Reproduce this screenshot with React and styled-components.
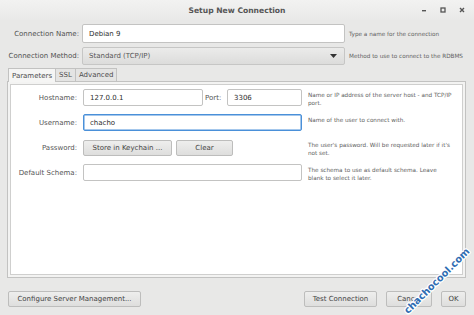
import styled, { createGlobalStyle } from "styled-components";

const GlobalStyle = createGlobalStyle`
  html, body {
    margin: 0;
    padding: 0;
    background: #e8e8e7;
  }
  * {
    box-sizing: border-box;
  }
`;

function WindowControls() {
  return (
    <Controls>
      <svg width="6" height="6" viewBox="0 0 6 6">
        <rect x="1" y="3" width="4" height="1.4" fill="#555" />
      </svg>
      <svg width="6" height="6" viewBox="0 0 6 6">
        <rect x="1" y="1" width="4" height="4" fill="none" stroke="#555" strokeWidth="1.3" />
      </svg>
      <svg width="6" height="6" viewBox="0 0 6 6">
        <path d="M1 1 L5 5 M5 1 L1 5" stroke="#555" strokeWidth="1.4" />
      </svg>
    </Controls>
  );
}

function App() {
  return (
    <Window>
      <GlobalStyle />
      <TitleBar>
        <Title>Setup New Connection</Title>
        <WindowControls />
      </TitleBar>

      <TopForm>
        <TopLabel>Connection Name:</TopLabel>
        <Entry $h={19}>Debian 9</Entry>
        <Hint>Type a name for the connection</Hint>

        <TopLabel>Connection Method:</TopLabel>
        <Combo>
          <span>Standard (TCP/IP)</span>
          <svg width="7" height="4" viewBox="0 0 7 4">
            <path d="M0 0 L7 0 L3.5 4 Z" fill="#333" />
          </svg>
        </Combo>
        <Hint>Method to use to connect to the RDBMS</Hint>
      </TopForm>

      <Tabs>
        <Tab $active>Parameters</Tab>
        <Tab>SSL</Tab>
        <Tab>Advanced</Tab>
      </Tabs>

      <Panel>
        <PanelInner>
          <ParamLabel>Hostname:</ParamLabel>
          <HostField>
            <Entry $h={17} $w={120}>127.0.0.1</Entry>
            <PortLabel>Port:</PortLabel>
            <Entry $h={17} $w={75}>3306</Entry>
          </HostField>
          <SmallHint>
            Name or IP address of the server host - and TCP/IP
            <br />
            port.
          </SmallHint>

          <ParamLabel>Username:</ParamLabel>
          <Entry $h={17} $focused>chacho</Entry>
          <SmallHint>Name of the user to connect with.</SmallHint>

          <ParamLabel>Password:</ParamLabel>
          <ButtonRow>
            <Button $w={89}>Store in Keychain ...</Button>
            <Button $w={57}>Clear</Button>
          </ButtonRow>
          <SmallHint>
            The user's password. Will be requested later if it's
            <br />
            not set.
          </SmallHint>

          <ParamLabel>Default Schema:</ParamLabel>
          <Entry $h={17} />
          <SmallHint>
            The schema to use as default schema. Leave
            <br />
            blank to select it later.
          </SmallHint>
        </PanelInner>
      </Panel>

      <Footer>
        <Button $w={133}>Configure Server Management...</Button>
        <FooterRight>
          <Button $w={73}>Test Connection</Button>
          <Button $w={46}>Cancel</Button>
          <Button $w={25}>OK</Button>
        </FooterRight>
      </Footer>

      <Watermark>chachocool.com</Watermark>
    </Window>
  );
}

const Window = styled.div`
  position: relative;
  width: 474px;
  height: 315px;
  display: flex;
  flex-direction: column;
  background: #e8e8e7;
  font-family: "DejaVu Sans", "Liberation Sans", sans-serif;
  font-size: 7px;
  color: #4a4a4a;
  overflow: hidden;
`;

const TitleBar = styled.div`
  position: relative;
  height: 20px;
  display: flex;
  align-items: center;
  justify-content: center;
  background: linear-gradient(#f2f2f1, #e9e9e8);
`;

const Title = styled.div`
  font-weight: bold;
  font-size: 7.6px;
  color: #565656;
  margin-top: 1px;
`;

const Controls = styled.div`
  position: absolute;
  right: 9px;
  top: 7px;
  display: flex;
  gap: 13px;
`;

const TopForm = styled.div`
  display: grid;
  grid-template-columns: 82px 263px 1fr;
  row-gap: 4px;
  align-items: center;
  margin-top: 4px;
`;

const TopLabel = styled.div`
  text-align: right;
  padding-right: 3px;
  white-space: nowrap;
  color: #505050;
`;

const Hint = styled.div`
  font-size: 5.7px;
  color: #606060;
  padding-left: 4px;
  white-space: nowrap;
`;

const SmallHint = styled.div`
  font-size: 5.7px;
  color: #606060;
  line-height: 8px;
  align-self: start;
  padding-top: 2px;
`;

const Entry = styled.div`
  height: ${({ $h }) => $h}px;
  width: ${({ $w }) => ($w ? `${$w}px` : "auto")};
  background: #ffffff;
  border: 1px solid ${({ $focused }) => ($focused ? "#4a90d9" : "#c3c3c2")};
  border-radius: 2px;
  box-shadow: ${({ $focused }) => ($focused ? "inset 0 0 0 0.5px #4a90d9" : "none")};
  display: flex;
  align-items: center;
  padding-left: 6px;
  font-size: 7px;
  color: #2e2e2e;
`;

const Combo = styled.div`
  height: 18px;
  display: flex;
  align-items: center;
  justify-content: space-between;
  padding: 0 6px;
  border: 1px solid #c6c6c5;
  border-radius: 2px;
  background: linear-gradient(#ebebea, #dcdcdb);
  color: #555;

  svg {
    margin-right: 1px;
  }
`;

const Tabs = styled.div`
  display: flex;
  align-items: flex-end;
  margin: 2px 0 0 8px;
  height: 14px;
`;

const Tab = styled.div`
  height: ${({ $active }) => ($active ? "14px" : "13px")};
  padding: 0 3px;
  display: flex;
  align-items: center;
  border: 1px solid #c2c2c1;
  border-bottom: none;
  margin-right: -1px;
  background: ${({ $active }) => ($active ? "#f5f5f4" : "#e4e4e3")};
  color: #4c4c4c;
  font-size: 7px;
  margin-bottom: ${({ $active }) => ($active ? "-1px" : "0")};
  position: relative;
  z-index: ${({ $active }) => ($active ? 1 : 0)};
`;

const Panel = styled.div`
  margin: 0 8px 0 7px;
  height: 197px;
  border: 1px solid #c2c2c1;
  background: #f3f3f2;
  padding: 2px;
`;

const PanelInner = styled.div`
  height: 100%;
  background: #ffffff;
  border: 1px solid #cfcfce;
  display: grid;
  grid-template-columns: 66px 219px 1fr;
  grid-auto-rows: 17px;
  column-gap: 6px;
  row-gap: 8px;
  padding: 4px 0 0 0;
  align-items: center;
`;

const ParamLabel = styled.div`
  text-align: right;
  white-space: nowrap;
  color: #555;
`;

const HostField = styled.div`
  display: flex;
  align-items: center;
`;

const PortLabel = styled.div`
  width: 24px;
  padding-left: 2px;
  color: #555;
`;

const ButtonRow = styled.div`
  display: flex;
  gap: 4px;
  height: 16px;
`;

const Button = styled.div`
  width: ${({ $w }) => $w}px;
  height: 16px;
  display: flex;
  align-items: center;
  justify-content: center;
  border: 1px solid #bdbdbc;
  border-radius: 2px;
  background: linear-gradient(#eeeeed, #dededd);
  color: #444;
  font-size: 7px;
  white-space: nowrap;
`;

const Footer = styled.div`
  display: flex;
  justify-content: space-between;
  align-items: center;
  padding: 13px 8px 0 8px;
`;

const FooterRight = styled.div`
  display: flex;
  gap: 9px;
`;

const Watermark = styled.div`
  position: absolute;
  left: 437px;
  top: 281px;
  transform: translate(-50%, -50%) rotate(-45deg);
  font-family: "DejaVu Sans", sans-serif;
  font-weight: bold;
  font-size: 9.8px;
  line-height: 1;
  color: #2f6db3;
  text-shadow:
    1px 0 0 #fff,
    -1px 0 0 #fff,
    0 1px 0 #fff,
    0 -1px 0 #fff,
    1px 1px 0 #fff,
    -1px -1px 0 #fff,
    1px -1px 0 #fff,
    -1px 1px 0 #fff;
  white-space: nowrap;
`;

export default App;
